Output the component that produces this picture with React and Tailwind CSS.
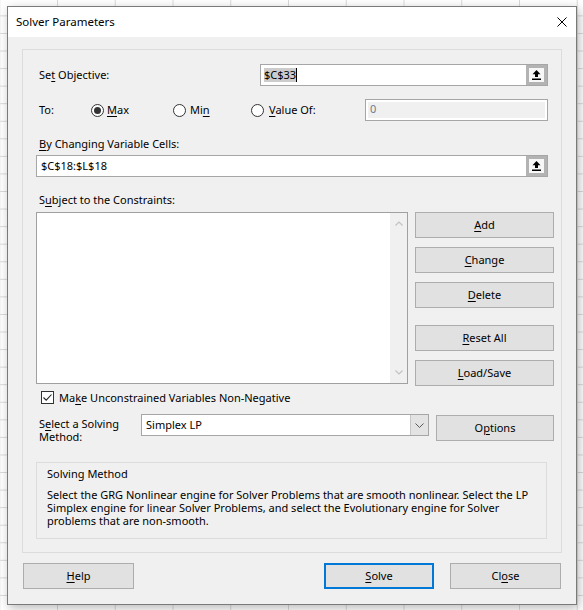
import React from "react";

const U = ({ children }) => (
  <span className="underline underline-offset-[2px] decoration-1">{children}</span>
);

function Btn({ children, className = "" }) {
  return (
    <div
      className={
        "flex items-center justify-center h-[26px] bg-[#e1e1e1] text-black " + className
      }
    >
      <span className="leading-[15px] -mt-px">{children}</span>
    </div>
  );
}

function Radio({ checked }) {
  return (
    <span className="w-[13px] h-[13px] rounded-full border border-[#333333] bg-white flex items-center justify-center shrink-0">
      {checked && <span className="w-[7px] h-[7px] rounded-full bg-[#333333]" />}
    </span>
  );
}

function UploadIcon() {
  return (
    <svg width="9" height="10" viewBox="0 0 9 10">
      <path d="M4.5 0 L0.5 4.2 H3 V7 H6 V4.2 H8.5 Z" fill="#000" />
      <rect x="0" y="8.5" width="9" height="1.5" fill="#000" />
    </svg>
  );
}

function RefButton() {
  return (
    <div className="w-[21px] h-full border-[3px] border-[#b3b3b3] bg-[#f7f7f7] flex items-center justify-center shrink-0">
      <UploadIcon />
    </div>
  );
}

export default function App() {
  return (
    <div className="min-h-[610px] w-full overflow-hidden bg-white bg-[linear-gradient(to_right,#dadada_1px,transparent_1px),linear-gradient(to_bottom,#dadada_1px,transparent_1px)] bg-size-[57.75px_17.57px] bg-position-[57px_15.4px] pt-[6px] pl-[7px] font-['Noto_Sans',sans-serif] text-[11px] text-black">
      <div className="w-[570px] h-[599px] border border-[#7a7a7a] shadow-[2px_3px_10px_rgba(0,0,0,0.28)] bg-[#f0f0f0] flex flex-col">
        {/* Title bar */}
        <div className="h-[30px] bg-white flex items-center justify-between pl-[8px] pr-[9px] shrink-0">
          <span className="leading-[16px] text-[11.5px]">Solver Parameters</span>
          <svg width="10" height="10" viewBox="0 0 10 10">
            <path d="M0.5 0.5 L9.5 9.5 M9.5 0.5 L0.5 9.5" stroke="#000" strokeWidth="1" />
          </svg>
        </div>

        {/* Main panel */}
        <div className="mx-[14px] mt-[12px] h-[504px] border border-[#dcdcdc] pl-[13px] flex flex-col shrink-0">
          {/* Set Objective */}
          <div className="mt-[14px] flex items-center h-[22px]">
            <div className="w-[224px] pl-[3px] leading-[16px]">
              Se<U>t</U> Objective:
            </div>
            <div className="w-[288px] h-[22px] border border-[#a6a6a6] bg-white flex items-stretch">
              <div className="flex-1 flex items-center pl-[3px]">
                <span className="bg-[#cccccc] leading-[14px]">$C$33</span>
                <span className="w-px h-[14px] bg-black" />
              </div>
              <RefButton />
            </div>
          </div>

          {/* To: radio row */}
          <div className="mt-[13px] flex items-center h-[22px]">
            <div className="w-[55px] pl-[3px] leading-[16px]">To:</div>
            <div className="w-[82px] flex items-center gap-[3px]">
              <Radio checked />
              <span className="leading-[16px]">
                <U>M</U>ax
              </span>
            </div>
            <div className="w-[78px] flex items-center gap-[4px]">
              <Radio />
              <span className="leading-[16px]">
                Mi<U>n</U>
              </span>
            </div>
            <div className="w-[114px] flex items-center gap-[5px]">
              <Radio />
              <span className="leading-[16px]">
                <U>V</U>alue Of:
              </span>
            </div>
            <div className="w-[183px] h-[22px] border border-[#a6a6a6] bg-white p-[2px]">
              <div className="h-full bg-[#f0f0f0] pl-[2px] text-[#6d7b8d] leading-[14px]">0</div>
            </div>
          </div>

          {/* By Changing */}
          <div className="mt-[15px] h-[16px] pl-[3px] leading-[16px]">
            <U>B</U>y Changing Variable Cells:
          </div>
          <div className="mt-[3px] w-[512px] h-[22px] border border-[#a6a6a6] bg-white flex items-stretch">
            <div className="flex-1 flex items-center pl-[4px] leading-[16px]">$C$18:$L$18</div>
            <RefButton />
          </div>

          {/* Constraints */}
          <div className="mt-[15px] h-[16px] pl-[3px] leading-[16px]">
            S<U>u</U>bject to the Constraints:
          </div>
          <div className="mt-[4px] flex items-start">
            <div className="w-[372px] h-[172px] border border-[#a0a0a0] bg-white flex justify-end">
              <div className="w-[17px] h-full bg-[#f0f0f0] flex flex-col items-center justify-between py-[8px]">
                <svg width="8" height="5" viewBox="0 0 8 5">
                  <path d="M0.5 4.5 L4 1 L7.5 4.5" fill="none" stroke="#c2c2c2" strokeWidth="1.2" />
                </svg>
                <svg width="8" height="5" viewBox="0 0 8 5">
                  <path d="M0.5 0.5 L4 4 L7.5 0.5" fill="none" stroke="#c2c2c2" strokeWidth="1.2" />
                </svg>
              </div>
            </div>
            <div className="ml-[7px] w-[139px] flex flex-col">
              <Btn className="border border-[#adadad]">
                <U>A</U>dd
              </Btn>
              <Btn className="mt-[9px] border border-[#adadad]">
                <U>C</U>hange
              </Btn>
              <Btn className="mt-[9px] border border-[#adadad]">
                <U>D</U>elete
              </Btn>
              <Btn className="mt-[17px] border border-[#adadad]">
                <U>R</U>eset All
              </Btn>
              <Btn className="mt-[9px] border border-[#adadad]">
                <U>L</U>oad/Save
              </Btn>
            </div>
          </div>

          {/* Checkbox */}
          <div className="mt-[5px] h-[13px] flex items-center pl-[5px] gap-[5px]">
            <span className="w-[13px] h-[13px] border border-[#333333] bg-white flex items-center justify-center shrink-0">
              <svg width="11" height="11" viewBox="0 0 11 11">
                <path d="M1.5 5.5 L4.2 8.2 L9.5 2.5" fill="none" stroke="#222" strokeWidth="1.1" />
              </svg>
            </span>
            <span className="leading-[16px]">
              Ma<U>k</U>e Unconstrained Variables Non-Negative
            </span>
          </div>

          {/* Select row */}
          <div className="mt-[10px] flex items-start">
            <div className="w-[105px] pl-[3px] pt-[3px] leading-[13px]">
              S<U>e</U>lect a Solving
              <br />
              Method:
            </div>
            <div className="w-[288px] h-[22px] border border-[#a6a6a6] bg-white flex items-stretch">
              <div className="flex-1 flex items-center pl-[4px] leading-[16px]">Simplex LP</div>
              <div className="w-[18px] bg-[#e3e3e3] border-l border-[#c6c6c6] flex items-center justify-center">
                <svg width="9" height="5" viewBox="0 0 9 5">
                  <path d="M0.5 0.5 L4.5 4.5 L8.5 0.5" fill="none" stroke="#5a5a5a" strokeWidth="1" />
                </svg>
              </div>
            </div>
            <Btn className="ml-[7px] mt-[1px] w-[118px] border border-[#adadad]">
              O<U>p</U>tions
            </Btn>
          </div>

          {/* Solving Method group */}
          <div className="mt-[19px] w-[511px] h-[77px] border border-[#dcdcdc] pl-[10px] pt-[3px]">
            <div className="leading-[15px]">Solving Method</div>
            <div className="mt-[7px] leading-[13px] whitespace-nowrap">
              Select the GRG Nonlinear engine for Solver Problems that are smooth nonlinear. Select the LP
              <br />
              Simplex engine for linear Solver Problems, and select the Evolutionary engine for Solver
              <br />
              problems that are non-smooth.
            </div>
          </div>
        </div>

        {/* Bottom buttons */}
        <div className="mt-[10px] flex pl-[15px]">
          <Btn className="w-[111px] border border-[#adadad]">
            <U>H</U>elp
          </Btn>
          <Btn className="ml-[190px] w-[110px] border-2 border-[#0078d7]">
            <U>S</U>olve
          </Btn>
          <Btn className="ml-[16px] w-[111px] border border-[#adadad]">
            Cl<U>o</U>se
          </Btn>
        </div>
      </div>
    </div>
  );
}
